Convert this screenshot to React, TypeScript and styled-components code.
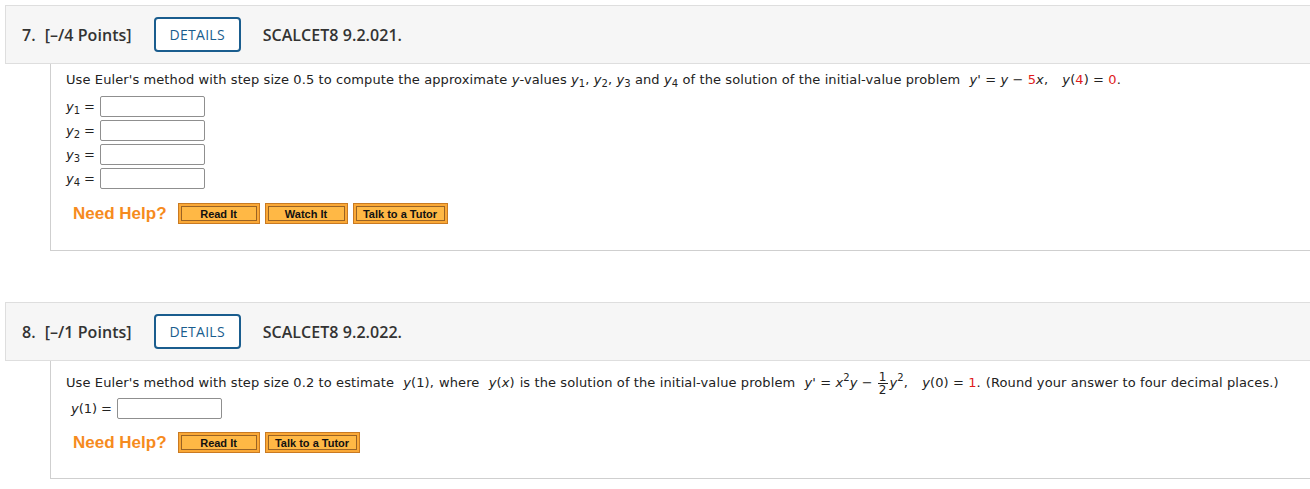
import React from "react";
import styled, { createGlobalStyle } from "styled-components";

const GlobalStyle = createGlobalStyle`
  html, body {
    margin: 0;
    padding: 0;
    background: #fff;
    overflow: hidden;
  }
  body {
    font-family: "DejaVu Sans", Verdana, sans-serif;
    color: #222;
  }
`;

const Page = styled.div`
  padding: 5px 0 0 5px;
  width: 1310px;
  display: flex;
  flex-direction: column;
  row-gap: 51px;
`;

const Question = styled.section`
  display: flex;
  flex-direction: column;
`;

const Header = styled.header`
  display: flex;
  align-items: center;
  height: 57px;
  padding-left: 16px;
  background: #f6f6f6;
  border: 1px solid #dedede;
  font-family: "Open Sans", "Liberation Sans", sans-serif;
  font-weight: 600;
  font-size: 16px;
  letter-spacing: 0.05px;
  color: #333;
`;

const Number = styled.span`
  margin-right: 9px;
`;

const Points = styled.span`
  margin-right: 22px;
`;

const DetailsButton = styled.button`
  width: 87px;
  height: 35px;
  margin-right: 22px;
  border: 2px solid #1a5d8e;
  border-radius: 4px;
  background: #fff;
  color: #1a5d8e;
  font-family: "Open Sans", "Liberation Sans", sans-serif;
  font-size: 14px;
  font-weight: 500;
  letter-spacing: 0.3px;
  padding: 0;
`;

const Code = styled.span``;

const Body = styled.div<{ $top: number; $bottom: number }>`
  margin-left: 45px;
  border-left: 1px solid #cfcfcf;
  border-bottom: 1px solid #cfcfcf;
  padding: ${(p) => p.$top}px 0 ${(p) => p.$bottom}px 15px;
  font-size: 13px;
`;

const Prompt = styled.p`
  margin: 0;
  line-height: 20px;
  letter-spacing: 0.1px;
  white-space: nowrap;
`;

const Math = styled.span`
  margin: 0 5px;
  white-space: nowrap;
`;

const V = styled.i`
  font-style: italic;
`;

const Red = styled.span`
  color: #e01b1b;
`;

const Sub = styled.sub`
  font-size: 10px;
  vertical-align: -3px;
  line-height: 0;
`;

const Sup = styled.sup`
  font-size: 10px;
  vertical-align: 6px;
  line-height: 0;
`;

const Frac = styled.span`
  display: inline-flex;
  flex-direction: column;
  align-items: center;
  vertical-align: middle;
  font-size: 12px;
  line-height: 12px;
  margin: 0 2px 0 5px;
`;

const Numer = styled.span`
  border-bottom: 1px solid #222;
  padding: 0 1px;
`;

const Answers = styled.div<{ $label: number; $top: number }>`
  display: grid;
  grid-template-columns: ${(p) => p.$label}px 105px;
  grid-auto-rows: 24px;
  margin-top: ${(p) => p.$top}px;
`;

const Label = styled.label`
  display: flex;
  align-items: center;
  justify-content: flex-end;
  padding-right: 5px;
  height: 21px;
  white-space: nowrap;
  column-gap: 4px;
`;

const AnswerInput = styled.input`
  box-sizing: border-box;
  width: 105px;
  height: 21px;
  border: 1px solid #8f8f8f;
  border-radius: 2px;
  padding: 0 3px;
  background: #fff;
`;

const HelpRow = styled.div<{ $top: number }>`
  display: flex;
  align-items: center;
  margin-top: ${(p) => p.$top}px;
  padding-left: 7px;
  height: 21px;
`;

const NeedHelp = styled.span`
  font-family: "Liberation Sans", Arial, sans-serif;
  font-weight: 700;
  font-size: 17px;
  color: #f68b1e;
  margin-right: 11px;
`;

const HelpButton = styled.button<{ $w: number }>`
  box-sizing: border-box;
  width: ${(p) => p.$w}px;
  height: 21px;
  margin-right: 5px;
  padding: 2px;
  border: 1px solid #c97a22;
  background: #faa836;
  display: flex;
`;

const ButtonFace = styled.span`
  flex: 1;
  display: flex;
  align-items: center;
  justify-content: center;
  border: 1px solid #9a6324;
  background: #ffb845;
  font-family: "Liberation Sans", Arial, sans-serif;
  font-weight: 700;
  font-size: 11px;
  color: #111;
`;

function Help({ buttons }: { buttons: [string, number][] }) {
  return (
    <>
      <NeedHelp>Need Help?</NeedHelp>
      {buttons.map(([label, w]) => (
        <HelpButton key={label} $w={w}>
          <ButtonFace>{label}</ButtonFace>
        </HelpButton>
      ))}
    </>
  );
}

function QuestionHeader({ n, pts, code }: { n: number; pts: number; code: string }) {
  return (
    <Header>
      <Number>{n}.</Number>
      <Points>[–/{pts} Points]</Points>
      <DetailsButton>DETAILS</DetailsButton>
      <Code>{code}</Code>
    </Header>
  );
}

export default function App() {
  return (
    <Page>
      <GlobalStyle />
      <Question>
        <QuestionHeader n={7} pts={4} code="SCALCET8 9.2.021." />
        <Body $top={6} $bottom={26}>
          <Prompt>
            Use Euler's method with step size 0.5 to compute the approximate <V>y</V>-values{" "}
            <V>y</V>
            <Sub>1</Sub>, <V>y</V>
            <Sub>2</Sub>, <V>y</V>
            <Sub>3</Sub> and <V>y</V>
            <Sub>4</Sub> of the solution of the initial-value problem
            <Math>
              {" "}
              <V>y</V>' = <V>y</V> − <Red>5</Red>
              <V>x</V>,
            </Math>
            <Math>
              {" "}
              <V>y</V>(<Red>4</Red>) = <Red>0</Red>.
            </Math>
          </Prompt>
          <Answers $label={34} $top={6}>
            {[1, 2, 3, 4].map((i) => (
              <React.Fragment key={i}>
                <Label>
                  <span>
                    <V>y</V>
                    <Sub>{i}</Sub>
                  </span>
                  =
                </Label>
                <AnswerInput />
              </React.Fragment>
            ))}
          </Answers>
          <HelpRow $top={11}>
            <Help
              buttons={[
                ["Read It", 82],
                ["Watch It", 83],
                ["Talk to a Tutor", 95],
              ]}
            />
          </HelpRow>
        </Body>
      </Question>
      <Question>
        <QuestionHeader n={8} pts={1} code="SCALCET8 9.2.022." />
        <Body $top={10} $bottom={25}>
          <Prompt>
            Use Euler's method with step size 0.2 to estimate
            <Math>
              {" "}
              <V>y</V>(1),
            </Math>
            where
            <Math>
              {" "}
              <V>y</V>(<V>x</V>)
            </Math>
            is the solution of the initial-value problem
            <Math>
              {" "}
              <V>y</V>' = <V>x</V>
              <Sup>2</Sup>
              <V>y</V> −
              <Frac>
                <Numer>1</Numer>
                <span>2</span>
              </Frac>
              <V>y</V>
              <Sup>2</Sup>,
            </Math>
            <Math>
              {" "}
              <V>y</V>(0) = <Red>1</Red>.
            </Math>
            (Round your answer to four decimal places.)
          </Prompt>
          <Answers $label={51} $top={2}>
            <Label>
              <span>
                <V>y</V>(1)
              </span>
              =
            </Label>
            <AnswerInput />
          </Answers>
          <HelpRow $top={10}>
            <Help
              buttons={[
                ["Read It", 82],
                ["Talk to a Tutor", 95],
              ]}
            />
          </HelpRow>
        </Body>
      </Question>
    </Page>
  );
}
